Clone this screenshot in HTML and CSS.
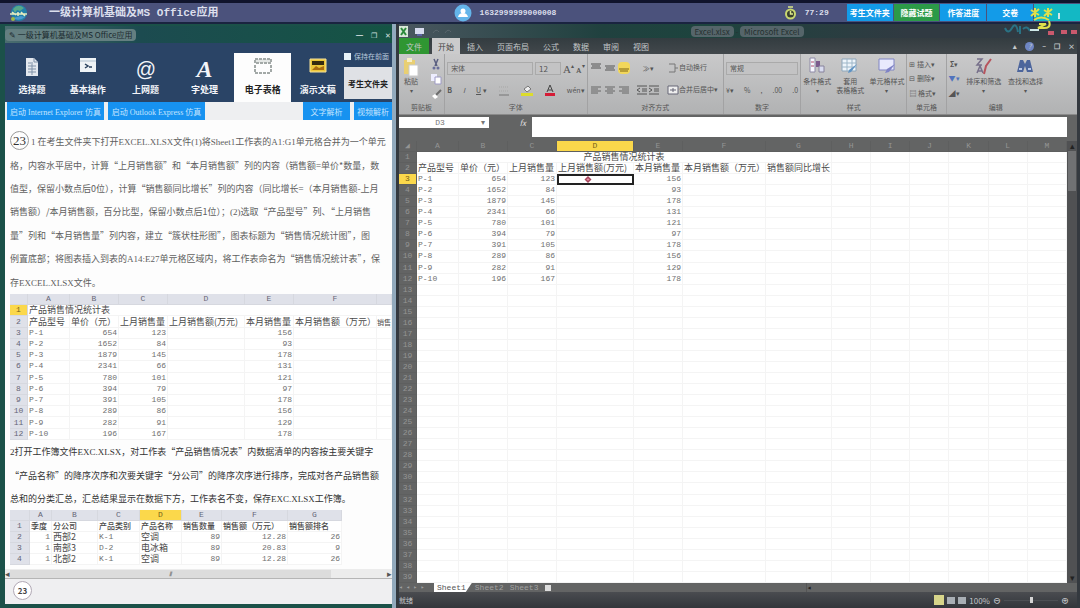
FILE: index.html
```html
<!DOCTYPE html>
<html lang="zh-CN">
    <head>
        <meta charset="utf-8">
        <title>一级计算机基础及MS Office应用</title>
        <link rel="stylesheet" href="styles.css">
    </head>
    <body>
        <header class="topbar">
            <div class="brand">
                <svg class="logo" viewBox="0 0 20 18">
                    <circle cx="10" cy="9" r="8" fill="#2380a8"/>
                    <path d="M4 5q5-6 11-1l-4 3-3-1-2 3z" fill="#58a98a"/>
                    <path d="M4 14q6 4 12-1l-4-1-4 1z" fill="#4b9ad0"/>
                    <path d="M1 10h17M3 8l4 3M9 8v4M12 8l4 4" stroke="#e8edc0" stroke-width="1.5"/>
                    <circle cx="4" cy="15" r="2" fill="#9cb84a"/>
                </svg>
                <h1>一级计算机基础及MS Office应用</h1>
            </div>
            <div class="user">
                <svg width="18" height="18" viewBox="0 0 18 18">
                    <circle cx="9" cy="9" r="8.500" fill="#64b5ea"/>
                    <circle cx="9" cy="7" r="2.500" fill="#fff"/>
                    <path d="M4 13q1-4 5-4t5 4z" fill="#fff"/>
                </svg>
                <span>1632999999000008</span>
            </div>
            <div class="timer">
                <svg width="13" height="14" viewBox="0 0 13 14">
                    <circle cx="6.500" cy="8" r="4.500" fill="#39402f" stroke="#c9d870" stroke-width="2"/>
                    <path d="M4 1h5M6.500 5v3h2.500" stroke="#dbe88a" stroke-width="1.500" fill="none"/>
                </svg>
                <span>77:29</span>
            </div>
            <nav class="actions">
                <button>考生文件夹</button>
                <button class="green">隐藏试题</button>
                <button>作答进度</button>
                <button>交卷</button>
                <button class="teal" aria-label="更多"></button>
            </nav>
            <svg class="mark" viewBox="0 0 80 34">
                <path d="M5 25q3 7 7 0t6 4M20 23v8M23 26q4-4 7 2" stroke="#2a7284" stroke-width="2" fill="none"/>
                <path d="M35 5v9M31 7l8 5M39 6l-8 7M48 5v9M44 7l8 5M52 6l-8 7M34 17q7-5 15 0M49 18q3 8-7 7h-4l8-4h-7" stroke="#dfe04c" stroke-width="2" fill="none"/>
                <path d="M48 30h6M61 29h6M71 29h6" stroke="#c9596d" stroke-width="4"/>
                <path d="M30 27h9M59 10v6" stroke="#cfe8e8" stroke-width="2"/>
            </svg>
        </header>
        <main class="desk">
            <section class="exam">
                <div class="exam-title">
                    <span class="caption">✎ 一级计算机基础及MS Office应用</span>
                    <span class="winbtns">
                        <button aria-label="最小化">━</button>
                        <button aria-label="最大化">❐</button>
                        <button aria-label="关闭">✕</button>
                    </span>
                </div>
                <div class="exam-body">
                    <nav class="types">
                        <a href="#">
                            <svg viewBox="0 0 20 20"><path d="M4 1h8l4 4v14H4z" fill="#e3e8ee"/><path d="M12 1v4h4M6 6h3M6 9h8M6 12h8M6 15h8M10 5v13" stroke="#7f91a7" fill="none"/></svg>
                            选择题
                        </a>
                        <a href="#">
                            <svg viewBox="0 0 20 20"><path d="M2 1h16v14H2z" fill="#eef3f6"/><path d="M2 4h16" stroke="#b1c2d0"/><path d="M7 7l3 2-3 2M11 10h3" stroke="#28405d" stroke-width="1.500" fill="none"/></svg>
                            基本操作
                        </a>
                        <a href="#"><i class="at">@</i>上网题</a>
                        <a href="#"><i class="word">A</i>字处理</a>
                        <a href="#" class="current">
                            <svg viewBox="0 0 20 20"><path d="M2 2h16v4H2zM2 15V8M18 15V8M2 16h4M14 16h4M6 16h8" stroke="#a3a9a7" stroke-width="2" stroke-dasharray="3 1" fill="#e4e7e5"/></svg>
                            电子表格
                        </a>
                        <a href="#">
                            <svg viewBox="0 0 20 20"><path d="M2 2h16v13H2z" fill="#ecc638" stroke="#f4e19a"/><path d="M4 4h12v4H4z" fill="#352b10"/><path d="M4 13l4-4 3 2 5-2v4z" fill="#a86b12"/></svg>
                            演示文稿
                        </a>
                        <div class="side">
                            <label><input type="checkbox">保持在前面</label>
                            <button>考生文件夹</button>
                        </div>
                    </nav>
                    <div class="launch">
                        <button class="wide">启动 Internet Explorer 仿真</button>
                        <button class="wide">启动 Outlook Express 仿真</button>
                        <button class="first-right">文字解析</button>
                        <button class="narrow">视频解析</button>
                    </div>
                    <article class="question">
                        <p>
                            <b class="no">23</b><span class="lat">1</span> 在考生文件夹下打开<span class="lat">EXCEL.XLSX</span>文件<span class="lat">(1)</span>将<span class="lat">Sheet1</span>工作表的<span class="lat">A1:G1</span>单元格合并为一个单元<br>
                            格，内容水平居中，计算“上月销售额”和“本月销售额”列的内容（销售额=单价*数量，数<br>
                            值型，保留小数点后0位），计算“销售额同比增长”列的内容（同比增长=（本月销售额-上月<br>
                            销售额）/本月销售额，百分比型，保留小数点后1位）；<span class="lat">(2)</span>选取“产品型号”列、“上月销售<br>
                            量”列和“本月销售量”列内容，建立“簇状柱形图”，图表标题为“销售情况统计图”，图<br>
                            例置底部；将图表插入到表的<span class="lat">A14:E27</span>单元格区域内，将工作表命名为“销售情况统计表”，保<br>
                            存<span class="lat">EXCEL.XLSX</span>文件。
                        </p>
                        <div class="shot">
                            <table class="grid small first">
                                <colgroup><col class="c18"><col class="c42"><col class="c49"><col class="c49"><col class="c77"><col class="c49"><col class="c83"><col></colgroup>
                                <tr><th></th><th>A</th><th>B</th><th>C</th><th>D</th><th>E</th><th>F</th><th></th></tr>
                                <tr><th class="on">1</th><td colspan="7">产品销售情况统计表</td></tr>
                                <tr><th>2</th><td>产品型号</td><td>单价（元）</td><td>上月销售量</td><td>上月销售额(万元)</td><td>本月销售量</td><td>本月销售额（万元）</td><td class="cut">销售</td></tr>
                                <tr><th>3</th><td class="k">P-1</td><td class="n">654</td><td class="n">123</td><td></td><td class="n">156</td><td></td><td></td></tr>
                                <tr><th>4</th><td class="k">P-2</td><td class="n">1652</td><td class="n">84</td><td></td><td class="n">93</td><td></td><td></td></tr>
                                <tr><th>5</th><td class="k">P-3</td><td class="n">1879</td><td class="n">145</td><td></td><td class="n">178</td><td></td><td></td></tr>
                                <tr><th>6</th><td class="k">P-4</td><td class="n">2341</td><td class="n">66</td><td></td><td class="n">131</td><td></td><td></td></tr>
                                <tr><th>7</th><td class="k">P-5</td><td class="n">780</td><td class="n">101</td><td></td><td class="n">121</td><td></td><td></td></tr>
                                <tr><th>8</th><td class="k">P-6</td><td class="n">394</td><td class="n">79</td><td></td><td class="n">97</td><td></td><td></td></tr>
                                <tr><th>9</th><td class="k">P-7</td><td class="n">391</td><td class="n">105</td><td></td><td class="n">178</td><td></td><td></td></tr>
                                <tr><th>10</th><td class="k">P-8</td><td class="n">289</td><td class="n">86</td><td></td><td class="n">156</td><td></td><td></td></tr>
                                <tr><th>11</th><td class="k">P-9</td><td class="n">282</td><td class="n">91</td><td></td><td class="n">129</td><td></td><td></td></tr>
                                <tr><th>12</th><td class="k">P-10</td><td class="n">196</td><td class="n">167</td><td></td><td class="n">178</td><td></td><td></td></tr>
                            </table>
                        </div>
                        <p class="strong">
                            <span class="lat">2</span>打开工作簿文件<span class="lat">EXC.XLSX</span>，对工作表“产品销售情况表”内数据清单的内容按主要关键字<br>
                            “产品名称”的降序次序和次要关键字“分公司”的降序次序进行排序，完成对各产品销售额<br>
                            总和的分类汇总，汇总结果显示在数据下方，工作表名不变，保存<span class="lat">EXC.XLSX</span>工作簿。
                        </p>
                        <table class="grid small second">
                            <colgroup><col class="c20"><col class="c22"><col class="c46"><col class="c42"><col class="c42"><col class="c40"><col class="c66"><col></colgroup>
                            <tr><th></th><th>A</th><th>B</th><th>C</th><th class="on">D</th><th>E</th><th>F</th><th>G</th></tr>
                            <tr class="names"><th>1</th><td>季度</td><td>分公司</td><td>产品类别</td><td>产品名称</td><td>销售数量</td><td>销售额（万元）</td><td>销售额排名</td></tr>
                            <tr><th>2</th><td class="n">1</td><td>西部2</td><td class="k">K-1</td><td>空调</td><td class="n">89</td><td class="n">12.28</td><td class="n">26</td></tr>
                            <tr><th>3</th><td class="n">1</td><td>南部3</td><td class="k">D-2</td><td>电冰箱</td><td class="n">89</td><td class="n">20.83</td><td class="n">9</td></tr>
                            <tr><th>4</th><td class="n">1</td><td>北部2</td><td class="k">K-1</td><td>空调</td><td class="n">89</td><td class="n">12.28</td><td class="n">26</td></tr>
                        </table>
                    </article>
                    <div class="hbar"><span>◂</span><i class="thumb">⦀</i><span>▸</span></div>
                    <footer class="pager"><button>23</button></footer>
                </div>
            </section>
            <section class="excel">
                <div class="excel-title">
                    <svg width="60" height="13" viewBox="0 0 60 13">
                        <path d="M0 1h9v11H0z" fill="#d9e9d8"/><path d="M2 3l5 7M7 3l-5 7" stroke="#2e8b3c" stroke-width="2"/>
                        <path d="M16 3h9v6h-9z" fill="#d7dbef"/><path d="M18 9h5v2h-5z" fill="#5b62a0"/>
                        <path d="M34 8q3-5 6-1M46 8q3-5 6-1" stroke="#59666d" fill="none"/>
                    </svg>
                    <span class="docname"><em>Excel.xlsx</em> - <em>Microsoft Excel</em></span>
                </div>
                <nav class="tabs">
                    <button class="file">文件</button>
                    <button class="current">开始</button>
                    <button>插入</button>
                    <button>页面布局</button>
                    <button>公式</button>
                    <button>数据</button>
                    <button>审阅</button>
                    <button>视图</button>
                    <span class="help"><b>▴</b><i>?</i><b>–</b><b>❐</b><b>×</b></span>
                </nav>
                <div class="ribbon">
                    <div class="group">
                        <div class="tools clip">
                            <button class="big">
                                <svg viewBox="0 0 20 20"><path d="M3 3h11v14H3z" fill="#e9cf72"/><path d="M6 1h5v4H6z" fill="#f6eec9"/><path d="M8 8h9v11H8z" fill="#fff" stroke="#c9c9c9"/></svg>
                                粘贴<small>▾</small>
                            </button>
                            <div class="stack">
                                <button aria-label="剪切"><svg viewBox="0 0 12 12"><path d="M4 1l3 7M8 1L5 8" stroke="#5a5f80" stroke-width="1.500"/><circle cx="4" cy="10" r="1.500" fill="#6a6f9a"/><circle cx="8" cy="10" r="1.500" fill="#6a6f9a"/></svg></button>
                                <button aria-label="复制"><svg viewBox="0 0 12 12"><path d="M1 1h6v7H1z" fill="#eef"/><path d="M5 4h6v7H5z" fill="#fff" stroke="#9d9ac4"/></svg></button>
                                <button aria-label="格式刷"><svg viewBox="0 0 12 12"><path d="M11 2L6 7" stroke="#6c6c6c" stroke-width="2"/><path d="M2 8l3-2 3 3-3 2z" fill="#fff"/></svg></button>
                            </div>
                        </div>
                        <span class="name">剪贴板</span>
                    </div>
                    <div class="group">
                        <div class="tools rows">
                            <div class="line">
                                <select class="font" aria-label="字体"><option>宋体</option></select>
                                <select class="size" aria-label="字号"><option>12</option></select>
                                <button class="serif">A<sup>▴</sup></button>
                                <button class="serif">ᴀ<sup>▾</sup></button>
                            </div>
                            <div class="line spread">
                                <button><b>B</b></button><button><i>I</i></button><button><u>U</u> ▾</button>
                                <button aria-label="边框"><svg viewBox="0 0 12 12"><path d="M1 3h10M1 7h10" stroke="#a7a7a7" stroke-dasharray="1 1"/><path d="M1 11h10" stroke="#777"/></svg></button>
                                <button aria-label="填充颜色"><svg viewBox="0 0 12 12"><path d="M3 5l4-3 3 3-4 3z" fill="#eee" stroke="#777"/><path d="M0 9h12v3H0z" fill="#dcdc2c"/></svg></button>
                                <button aria-label="字体颜色"><svg viewBox="0 0 12 12"><path d="M3 8l3-7 3 7M4 6h4" stroke="#444" fill="none"/><path d="M1 9h10v3H1z" fill="#d51b36"/></svg></button>
                                <button>wén▾</button>
                            </div>
                        </div>
                        <span class="name">字体</span>
                    </div>
                    <div class="group">
                        <div class="tools rows">
                            <div class="line">
                                <button aria-label="顶端对齐"><svg viewBox="0 0 12 12"><path d="M1 2h10M2 4h8M1 6h10" stroke="#555"/></svg></button>
                                <button aria-label="垂直居中"><svg viewBox="0 0 12 12"><path d="M1 4h10M2 6h8M1 8h10" stroke="#555"/></svg></button>
                                <button class="lit" aria-label="底端对齐"><svg viewBox="0 0 12 12"><path d="M1 7h10M2 9h8" stroke="#7c6414"/></svg></button>
                                <button class="mid">≫▾</button>
                                <button class="text"><svg viewBox="0 0 12 12"><path d="M2 2h6v8H2M8 6h3" stroke="#777" fill="none"/></svg>自动换行</button>
                            </div>
                            <div class="line">
                                <button aria-label="左对齐"><svg viewBox="0 0 12 12"><path d="M1 3h10M1 5h7M1 7h10M1 9h7" stroke="#666"/></svg></button>
                                <button aria-label="居中"><svg viewBox="0 0 12 12"><path d="M1 3h10M3 5h6M1 7h10M3 9h6" stroke="#666"/></svg></button>
                                <button aria-label="右对齐"><svg viewBox="0 0 12 12"><path d="M1 3h10M4 5h7M1 7h10M4 9h7" stroke="#666"/></svg></button>
                                <button class="mid" aria-label="缩进"><svg class="indent" viewBox="0 0 24 12"><path d="M1 2h10M6 5h5M6 7h5M1 10h10M4 4L1 6l3 2M13 2h10M18 5h5M18 7h5M13 10h10M13 4l3 2-3 2" stroke="#555" fill="none"/></svg></button>
                                <button class="text"><svg viewBox="0 0 12 12"><path d="M1 2h10v8H1zM3 6h6M6 4v4" stroke="#667" fill="#eee"/></svg>合并后居中▾</button>
                            </div>
                        </div>
                        <span class="name">对齐方式</span>
                    </div>
                    <div class="group">
                        <div class="tools rows">
                            <div class="line"><select class="format" aria-label="数字格式"><option>常规</option></select></div>
                            <div class="line spread"><button>¥▾</button><button>%</button><button>,</button><button>.00</button><button>.0</button></div>
                        </div>
                        <span class="name">数字</span>
                    </div>
                    <div class="group">
                        <div class="tools bigs">
                            <button class="big"><svg viewBox="0 0 20 20"><path d="M3 1h5v14H3z" fill="#f7f7ff" stroke="#8e8aa6"/><path d="M9 4h4v6H9z" fill="#7c5b8e"/><path d="M12 9h5v6h-5z" fill="#d9dcf0" stroke="#87829c"/><path d="M4 5h3M4 9h3" stroke="#b05070"/></svg>条件格式<small>▾</small></button>
                            <button class="big"><svg viewBox="0 0 20 20"><path d="M2 2h14v12H2z" fill="#eef5fb" stroke="#8da6bb"/><path d="M2 6h14M2 10h14M7 2v12M12 2v12" stroke="#9db6c8"/><path d="M17 7l-6 8-3 1 1-3z" fill="#5f93c4"/></svg>套用<br>表格格式</button>
                            <button class="big"><svg viewBox="0 0 20 20"><path d="M2 2h15v11H2z" fill="#e8eafd" stroke="#8085c4"/><path d="M18 7l-6 8-4 1 2-4z" fill="#7f83c6"/></svg>单元格样式<small>▾</small></button>
                        </div>
                        <span class="name">样式</span>
                    </div>
                    <div class="group">
                        <div class="tools stack left"><button>⊞ 插入▾</button><button>⊟ 删除▾</button><button>▤ 格式▾</button></div>
                        <span class="name">单元格</span>
                    </div>
                    <div class="group edit">
                        <div class="tools bigs">
                            <div class="stack"><button><b>Σ</b>▾</button><button class="blue">▼▾</button><button>◢▾</button></div>
                            <button class="big"><svg viewBox="0 0 20 20"><path d="M3 2h5l-5 6h5M3 16l3-7 3 7M4 14h4" stroke="#77708a" stroke-width="1.500" fill="none"/><path d="M17 2l-5 7-2 8" stroke="#b6545d" stroke-width="2" fill="none"/></svg>排序和筛选<small>▾</small></button>
                            <button class="big"><svg viewBox="0 0 20 20"><path d="M5 3h3l2 4 2-4h3l3 12h-6l-2-6-2 6H2z" fill="#4c659c"/><path d="M4 12h3M13 12h3" stroke="#b7c7e7" stroke-width="2"/></svg>查找和选择<small>▾</small></button>
                        </div>
                        <span class="name">编辑</span>
                    </div>
                </div>
                <div class="formula">
                    <input class="ref" value="D3" aria-label="名称框">
                    <span class="drop">▾</span>
                    <label class="fx" for="fx">fx</label>
                    <input id="fx" type="text">
                </div>
                <div class="sheet">
                    <table class="grid book">
                        <colgroup><col class="c18"><col class="c42"><col class="c49"><col class="c49"><col class="c77"><col class="c49"><col class="c83"><col class="c66"><col><col><col><col><col><col></colgroup>
                        <tbody id="rows">
                            <tr><th>◢</th><th>A</th><th>B</th><th>C</th><th class="on">D</th><th>E</th><th>F</th><th>G</th><th>H</th><th>I</th><th>J</th><th>K</th><th>L</th><th>M</th></tr>
                            <tr><th>1</th><td colspan="7" class="title">产品销售情况统计表</td><td></td><td></td><td></td><td></td><td></td><td></td></tr>
                            <tr><th>2</th><td>产品型号</td><td>单价（元）</td><td>上月销售量</td><td>上月销售额(万元)</td><td>本月销售量</td><td>本月销售额（万元）</td><td>销售额同比增长</td><td></td><td></td><td></td><td></td><td></td><td></td></tr>
                            <tr><th class="on">3</th><td class="k">P-1</td><td class="n">654</td><td class="n">123</td><td class="active"><svg class="cursor" viewBox="0 0 10 10"><path d="M5 0l5 5-5 5-5-5z" fill="#a8455c"/><path d="M5 3v4M3 5h4" stroke="#f0a4b4"/></svg></td><td class="n">156</td></tr>
                            <tr><th>4</th><td class="k">P-2</td><td class="n">1652</td><td class="n">84</td><td></td><td class="n">93</td></tr>
                            <tr><th>5</th><td class="k">P-3</td><td class="n">1879</td><td class="n">145</td><td></td><td class="n">178</td></tr>
                            <tr><th>6</th><td class="k">P-4</td><td class="n">2341</td><td class="n">66</td><td></td><td class="n">131</td></tr>
                            <tr><th>7</th><td class="k">P-5</td><td class="n">780</td><td class="n">101</td><td></td><td class="n">121</td></tr>
                            <tr><th>8</th><td class="k">P-6</td><td class="n">394</td><td class="n">79</td><td></td><td class="n">97</td></tr>
                            <tr><th>9</th><td class="k">P-7</td><td class="n">391</td><td class="n">105</td><td></td><td class="n">178</td></tr>
                            <tr><th>10</th><td class="k">P-8</td><td class="n">289</td><td class="n">86</td><td></td><td class="n">156</td></tr>
                            <tr><th>11</th><td class="k">P-9</td><td class="n">282</td><td class="n">91</td><td></td><td class="n">129</td></tr>
                            <tr><th>12</th><td class="k">P-10</td><td class="n">196</td><td class="n">167</td><td></td><td class="n">178</td></tr>
                        </tbody>
                    </table>
                    <div class="vbar"><span>▴</span><i></i><span>▾</span></div>
                </div>
                <div class="sheets">
                    <span class="arrows">◂ ◂ ▸ ▸</span>
                    <button class="current">Sheet1</button>
                    <button>Sheet2</button>
                    <button>Sheet3</button>
                    <button class="add" aria-label="插入工作表"></button>
                    <span class="track">◂</span>
                </div>
                <footer class="status">
                    <span>就绪</span>
                    <span class="zoom">
                        <i class="view lit"></i><i class="view"></i><i class="view"></i>
                        <label for="zoom">100%</label>
                        <b>⊖</b>
                        <input id="zoom" type="range">
                        <b>⊕</b>
                    </span>
                </footer>
            </section>
        </main>
        <script>
            // Fill the sheet with empty cells
            var rows = document.getElementById("rows");
            for (var r = 13; r <= 39; r++) {
                var row = rows.insertRow();
                var head = document.createElement("th");
                head.innerText = r;
                row.appendChild(head);
            }
            for (var i = 3; i < rows.rows.length; i++) {
                while (rows.rows[i].cells.length < 14) {
                    rows.rows[i].insertCell();
                }
            }
        </script>
    </body>
</html>
```
FILE: styles.css
```css
* {
    box-sizing: border-box;
}

body {
    margin: 0;
    height: 100vh;
    display: flex;
    flex-direction: column;
    overflow: hidden;
    background-color: #151b36;
    color: #444;
    font-family: "Noto Sans CJK SC", sans-serif;
    font-size: 9px;
}

button, input, select {
    margin: 0;
    padding: 0;
    border: 0;
    border-radius: 0;
    background: none;
    color: inherit;
    font: inherit;
    white-space: nowrap;
}

a {
    color: inherit;
    text-decoration: none;
}

/* Top bar */
.topbar {
    position: relative;
    flex: none;
    display: flex;
    align-items: center;
    height: 24px;
    border-top: 3px solid #10142c;
    border-bottom: 2px solid #1a2440;
    background-color: #4b527c;
    color: #dcdfec;
}

.brand {
    display: flex;
    align-items: center;
    gap: 20px;
    flex: 0 0 42%;
    padding-left: 9px;
}

.logo {
    width: 20px;
    height: 18px;
}

.brand h1 {
    margin: 0;
    font-family: "Liberation Mono", "Noto Sans CJK SC", monospace;
    font-size: 11px;
    font-weight: bold;
    line-height: 18px;
}

.user, .timer {
    display: flex;
    align-items: center;
    gap: 8px;
    font-family: "Liberation Mono", monospace;
    font-weight: bold;
    font-size: 8px;
}

.timer {
    margin-left: auto;
    padding-right: 18px;
}

.actions {
    display: flex;
    flex: 0 0 21.6%;
    gap: 1px;
    height: 17px;
}

.actions button {
    flex: 1;
    background-color: #139be8;
    color: #fff;
    font-size: 8px;
    font-weight: bold;
}

.actions .green {
    background-color: #2c9a48;
}

.actions .teal {
    background-color: #13b8c4;
}

/* Badge floating over the corner of both bars */
.mark {
    position: absolute;
    top: 0;
    right: 0;
    z-index: 2;
    width: 80px;
    height: 34px;
}

.desk {
    flex: 1;
    min-height: 0;
    display: grid;
    grid-template-columns: 11fr 19fr;
}

/* Exam window */
.exam {
    min-width: 0;
    display: flex;
    flex-direction: column;
    padding: 2px 0 4px 5px;
    border-right: 4px solid #92aabd;
    background-color: #1b5149;
}

.exam-title {
    display: flex;
    justify-content: space-between;
    align-items: center;
    height: 17px;
    background: linear-gradient(90deg, #4a6d70, #1c4b50 35%, #155444);
    color: #1c2b30;
    font-size: 8px;
}

.caption {
    padding: 0 4px;
    border-radius: 4px;
    background-color: #647f81;
    line-height: 12px;
}

.winbtns {
    display: flex;
    gap: 8px;
    padding-right: 1px;
    color: #d5e0e0;
    font-size: 7px;
}

.exam-body {
    flex: 1;
    min-height: 0;
    display: flex;
    flex-direction: column;
    background-color: #fdfdfd;
}

.types {
    flex: none;
    display: grid;
    grid-template-columns: 54fr 58fr 58fr 60fr 57fr 53fr 48fr;
    height: 59px;
    padding-top: 10px;
    background-color: #2a4466;
}

.types a {
    display: flex;
    flex-direction: column;
    align-items: center;
    gap: 6px;
    padding-top: 4px;
    color: #f3f5f9;
    font-size: 9px;
    font-weight: bold;
    line-height: 14px;
    white-space: nowrap;
}

.types svg, .types i {
    width: 20px;
    height: 20px;
    text-align: center;
}

.types .at {
    font: 20px/24px "Liberation Sans", sans-serif;
}

.types .word {
    font: italic bold 24px/24px "Liberation Serif", serif;
}

.types .current {
    background-color: #fdfdfd;
    color: #222;
}

.side {
    display: flex;
    flex-direction: column;
    gap: 8px;
    color: #b9c8dc;
    font-size: 7px;
}

.side label {
    display: flex;
    align-items: center;
    gap: 3px;
    height: 6px;
    white-space: nowrap;
}

.side input {
    appearance: none;
    flex: none;
    width: 7px;
    height: 7px;
    background-color: #e8f2f8;
}

.side button {
    height: 32px;
    background-color: #dfe1e5;
    color: #222;
    font-size: 8px;
    font-weight: bold;
}

.launch {
    flex: none;
    display: flex;
    gap: 4px;
    height: 18px;
    padding-left: 2px;
    background-color: #eeeff1;
}

.launch button {
    flex: 0 1 47px;
    min-width: 0;
    overflow: hidden;
    background-color: #1792f0;
    color: #c5e5ff;
    font-family: "Liberation Serif", "Noto Sans CJK SC", serif;
    font-size: 8px;
}

.launch .wide {
    flex-basis: 97px;
}

.launch .first-right {
    margin-left: auto;
}

.launch .narrow {
    flex-basis: 38px;
}

.question {
    flex: 1;
    min-height: 0;
    overflow: hidden;
    padding-left: 5px;
}

.question p {
    margin: 0;
    padding-top: 10px;
    height: 174px;
    color: #606060;
    font-size: 9px;
    line-height: 23px;
    white-space: nowrap;
}

.question .strong {
    height: 70px;
    padding-top: 0;
    color: #333;
}

.lat {
    font-family: "Liberation Serif", serif;
}

.no {
    display: inline-block;
    width: 19px;
    height: 19px;
    margin-right: 2px;
    border: 1px solid #999;
    border-radius: 50%;
    color: #333;
    font: 13px/17px "Liberation Serif", serif;
    text-align: center;
}

.shot {
    height: 146px;
    overflow: hidden;
}

/* Sheets */
.grid {
    table-layout: fixed;
    width: 100%;
    border-collapse: separate;
    border-spacing: 0;
    background-color: #fff;
    line-height: 10px;
    white-space: nowrap;
}

.grid th, .grid td {
    padding: 0 1px;
    border-right: 1px solid #f4f4f4;
    border-bottom: 1px solid #f4f4f4;
    text-align: left;
}

.grid td {
    color: #4a4a4a;
    font-size: 9px;
}

.grid th {
    padding: 0;
    font: 8px/10px "Liberation Mono", monospace;
    text-align: center;
}

.small th {
    border-color: #d6d8df;
    background-color: #dfe1e9;
    color: #667;
}

.grid .on {
    background-color: #fbd84b;
    color: #75601a;
}

.grid .k, .grid .n {
    color: #707070;
    font-family: "Liberation Mono", monospace;
    font-size: 8px;
}

.grid .n {
    text-align: right;
}

.grid .cut {
    padding: 0;
    overflow: hidden;
    font-size: 7px;
}

.first {
    height: 146px;
}

.second {
    width: 332px;
}

.second .names td {
    font-weight: 500;
    font-size: 8px;
}

.c18 { width: 18px; }
.c20 { width: 20px; }
.c22 { width: 22px; }
.c40 { width: 40px; }
.c42 { width: 42px; }
.c46 { width: 46px; }
.c49 { width: 49px; }
.c66 { width: 66px; }
.c77 { width: 77px; }
.c83 { width: 83px; }

.hbar {
    flex: none;
    display: flex;
    align-items: center;
    justify-content: space-between;
    height: 10px;
    border-bottom: 1px solid #b5b5b5;
    background-color: #ececec;
    color: #555;
    line-height: 8px;
}

.thumb {
    flex: 0 0 83%;
    margin-right: auto;
    background-color: #dcdcdc;
    font-size: 6px;
    text-align: center;
}

.pager {
    flex: none;
    height: 25px;
    padding: 2px 8px;
    background-color: #efeff1;
}

.pager button {
    width: 19px;
    height: 19px;
    border: 1px solid #b1a9b5;
    border-radius: 50%;
    background-color: #fff;
    font-size: 8px;
    font-weight: bold;
}

/* Spreadsheet window */
.excel {
    min-width: 0;
    display: flex;
    flex-direction: column;
    padding: 0 3px;
    background-color: #34393f;
}

.excel-title {
    flex: none;
    display: flex;
    justify-content: space-between;
    align-items: center;
    height: 14px;
    background: linear-gradient(90deg, #4a5760, #20413f 30%, #1d443e 45%, #303a42 75%);
}

.docname {
    flex: 0 0 57%;
    color: #25302f;
    font-size: 8px;
    line-height: 11px;
}

.docname em {
    padding: 0 4px;
    border-radius: 4px;
    background-color: #55656a;
    font-style: normal;
}

.tabs {
    flex: none;
    display: flex;
    height: 16px;
    background: linear-gradient(#333c40, #42484c);
    color: #c4c8ca;
    font-size: 8px;
}

.tabs button {
    padding: 0 7px;
}

.tabs .file {
    margin-right: 3px;
    background-color: #2f9632;
}

.tabs .current {
    padding: 0 6px;
    background-color: #cbcbcc;
    color: #444;
}

.help {
    display: flex;
    align-items: center;
    gap: 8px;
    margin-left: auto;
    padding-right: 2px;
    font-size: 7px;
}

.help i {
    width: 9px;
    height: 9px;
    border-radius: 50%;
    background-color: #6e86c4;
    line-height: 9px;
    text-align: center;
}

.ribbon {
    flex: none;
    display: grid;
    grid-template-columns: 46fr 142fr 136fr 77fr 106fr 39fr 130fr;
    height: 61px;
    border-bottom: 1px solid #8a8a8a;
    background: linear-gradient(#c9c9ca, #b1b2b3);
    color: #555;
    font-size: 7px;
    line-height: 9px;
}

.group {
    min-width: 0;
    display: flex;
    flex-direction: column;
    justify-content: space-between;
    padding: 3px 2px 1px;
    border-right: 1px solid #a2a2a3;
}

.edit {
    padding-right: 34px;
    border-right: 0;
}

.name {
    line-height: 11px;
    text-align: center;
}

.tools {
    height: 44px;
}

.tools svg {
    width: 12px;
    height: 12px;
    vertical-align: middle;
}

.tools .indent {
    width: 24px;
}

.clip, .bigs {
    display: flex;
    justify-content: space-between;
}

.big {
    display: flex;
    flex-direction: column;
    align-items: center;
    min-width: 20px;
}

.tools .big svg {
    width: 20px;
    height: 20px;
    flex: none;
}

.big small {
    font-size: 6px;
}

.stack {
    display: flex;
    flex-direction: column;
    justify-content: space-around;
}

.left button {
    text-align: left;
}

.blue {
    color: #5173bd;
}

.rows {
    display: flex;
    flex-direction: column;
    justify-content: space-around;
}

.line {
    display: flex;
    align-items: center;
    gap: 2px;
    height: 14px;
}

.spread {
    justify-content: space-between;
}

.mid {
    flex: 1;
}

.text {
    flex: 0 0 54px;
    text-align: left;
}

.line select {
    appearance: none;
    height: 13px;
    padding-left: 3px;
    border: 1px solid #aaa;
    background-color: #c3c3c4;
}

.line .font {
    flex: 1;
}

.line .size {
    width: 26px;
    font-size: 8px;
}

.line .format {
    width: 100%;
}

.serif {
    font-family: "Liberation Serif", serif;
    font-size: 11px;
}

.serif sup {
    font-size: 6px;
}

.lit {
    border-radius: 4px;
    background-color: #f2d75a;
}

.formula {
    flex: none;
    display: flex;
    height: 26px;
    padding: 2px 10px 4px 0;
    background-color: #636464;
    color: #777;
    font-size: 8px;
}

.ref {
    width: 82px;
    height: 11px;
    background-color: #fff;
    font-family: "Liberation Mono", monospace;
    font-size: 8px;
    text-align: center;
}

.drop {
    width: 8px;
    height: 11px;
    background-color: #fff;
    line-height: 10px;
}

.fx {
    width: 43px;
    padding-right: 6px;
    color: #ddd;
    font-style: italic;
    line-height: 11px;
    text-align: right;
}

.formula [type="text"] {
    flex: 1;
    background-color: #fff;
}

.sheet {
    flex: 1;
    min-height: 0;
    display: grid;
    grid-template-columns: 1fr 10px;
    overflow: hidden;
}

.book {
    height: 100%;
}

.book th {
    border-color: #5e5f5f;
    background-color: #636464;
    color: #949494;
}

.book .title {
    text-align: center;
}

.book .active {
    border: 2px solid #222;
    padding: 0;
    line-height: 7px;
}

.cursor {
    display: block;
    width: 10px;
    height: 7px;
    margin-left: 24px;
    overflow: visible;
}

.vbar {
    display: flex;
    flex-direction: column;
    align-items: center;
    background-color: #505153;
    color: #222;
    line-height: 10px;
}

.vbar i {
    width: 8px;
    height: 40px;
    margin-bottom: auto;
    background-color: #707173;
}

.sheets {
    flex: none;
    display: flex;
    height: 9px;
    background-color: #636464;
    color: #a0a0a0;
    font: 8px/9px "Liberation Mono", monospace;
}

.arrows {
    width: 35px;
    font-size: 6px;
}

.sheets button {
    padding: 0 3px;
    line-height: 9px;
}

.sheets .current {
    padding-right: 6px;
    background-color: #fff;
    color: #555;
    clip-path: polygon(0 0, 100% 0, 84% 100%, 0 100%);
}

.sheets .add {
    width: 6px;
    height: 6px;
    margin: 2px 4px;
    padding: 0;
    background-color: #ddd;
}

.track {
    flex: 0 0 40%;
    margin-left: auto;
    border-left: 1px solid #555;
    color: #222;
}

.status {
    flex: none;
    display: flex;
    justify-content: space-between;
    align-items: center;
    height: 16px;
    background: linear-gradient(#4a4c50, #33363b);
    color: #c3c5c8;
    font-size: 7px;
}

.zoom {
    display: flex;
    align-items: center;
    gap: 3px;
    padding-right: 8px;
    font-size: 8px;
}

.view {
    width: 8px;
    height: 7px;
    background-color: #a9afb5;
}

.view.lit {
    width: 10px;
    height: 10px;
    border-radius: 0;
    background-color: #d7d58a;
}

.zoom input {
    appearance: none;
    width: 54px;
    height: 1px;
    background-color: #4c4f54;
}

.zoom input::-webkit-slider-thumb {
    appearance: none;
    width: 3px;
    height: 6px;
    background-color: #d5d5d5;
}
```
